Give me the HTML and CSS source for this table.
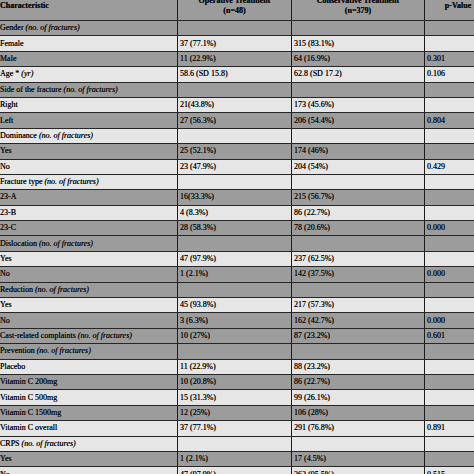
FILE: index.html
```html
<!DOCTYPE html>
<html>
<head>
<meta charset="utf-8">
<link rel="stylesheet" href="styles.css">
</head>
<body>
<div class="tbl">
  <div class="row head dark">
    <div class="c c1">Characteristic</div>
    <div class="c">Operative Treatment<br>(n=48)</div>
    <div class="c">Conservative Treatment<br>(n=379)</div>
    <div class="c">p-Value</div>
  </div>
  <div class="row dark"><div class="c c1">Gender&nbsp;<i>(no. of fractures)</i></div><div class="c"></div><div class="c"></div><div class="c"></div></div>
  <div class="row light"><div class="c c1">Female</div><div class="c">37 (77.1%)</div><div class="c">315 (83.1%)</div><div class="c"></div></div>
  <div class="row dark"><div class="c c1">Male</div><div class="c">11 (22.9%)</div><div class="c">64 (16.9%)</div><div class="c">0.301</div></div>
  <div class="row light"><div class="c c1">Age *&nbsp;<i>(yr)</i></div><div class="c">58.6 (SD 15.8)</div><div class="c">62.8 (SD 17.2)</div><div class="c">0.106</div></div>
  <div class="row dark"><div class="c c1">Side of the fracture&nbsp;<i>(no. of fractures)</i></div><div class="c"></div><div class="c"></div><div class="c"></div></div>
  <div class="row light"><div class="c c1">Right</div><div class="c">21(43.8%)</div><div class="c">173 (45.6%)</div><div class="c"></div></div>
  <div class="row dark"><div class="c c1">Left</div><div class="c">27 (56.3%)</div><div class="c">206 (54.4%)</div><div class="c">0.804</div></div>
  <div class="row light"><div class="c c1">Dominance&nbsp;<i>(no. of fractures)</i></div><div class="c"></div><div class="c"></div><div class="c"></div></div>
  <div class="row dark"><div class="c c1">Yes</div><div class="c">25 (52.1%)</div><div class="c">174 (46%)</div><div class="c"></div></div>
  <div class="row light"><div class="c c1">No</div><div class="c">23 (47.9%)</div><div class="c">204 (54%)</div><div class="c">0.429</div></div>
  <div class="row light"><div class="c c1">Fracture type&nbsp;<i>(no. of fractures)</i></div><div class="c"></div><div class="c"></div><div class="c"></div></div>
  <div class="row dark"><div class="c c1">23-A</div><div class="c">16(33.3%)</div><div class="c">215 (56.7%)</div><div class="c"></div></div>
  <div class="row light"><div class="c c1">23-B</div><div class="c">4 (8.3%)</div><div class="c">86 (22.7%)</div><div class="c"></div></div>
  <div class="row dark"><div class="c c1">23-C</div><div class="c">28 (58.3%)</div><div class="c">78 (20.6%)</div><div class="c">0.000</div></div>
  <div class="row dark"><div class="c c1">Dislocation&nbsp;<i>(no. of fractures)</i></div><div class="c"></div><div class="c"></div><div class="c"></div></div>
  <div class="row light"><div class="c c1">Yes</div><div class="c">47 (97.9%)</div><div class="c">237 (62.5%)</div><div class="c"></div></div>
  <div class="row dark"><div class="c c1">No</div><div class="c">1 (2.1%)</div><div class="c">142 (37.5%)</div><div class="c">0.000</div></div>
  <div class="row dark"><div class="c c1">Reduction&nbsp;<i>(no. of fractures)</i></div><div class="c"></div><div class="c"></div><div class="c"></div></div>
  <div class="row light"><div class="c c1">Yes</div><div class="c">45 (93.8%)</div><div class="c">217 (57.3%)</div><div class="c"></div></div>
  <div class="row dark"><div class="c c1">No</div><div class="c">3 (6.3%)</div><div class="c">162 (42.7%)</div><div class="c">0.000</div></div>
  <div class="row dark"><div class="c c1">Cast-related complaints&nbsp;<i>(no. of fractures)</i></div><div class="c">10 (27%)</div><div class="c">87 (23.2%)</div><div class="c">0.601</div></div>
  <div class="row dark"><div class="c c1">Prevention&nbsp;<i>(no. of fractures)</i></div><div class="c"></div><div class="c"></div><div class="c"></div></div>
  <div class="row light"><div class="c c1">Placebo</div><div class="c">11 (22.9%)</div><div class="c">88 (23.2%)</div><div class="c"></div></div>
  <div class="row dark"><div class="c c1">Vitamin C 200mg</div><div class="c">10 (20.8%)</div><div class="c">86 (22.7%)</div><div class="c"></div></div>
  <div class="row light"><div class="c c1">Vitamin C 500mg</div><div class="c">15 (31.3%)</div><div class="c">99 (26.1%)</div><div class="c"></div></div>
  <div class="row dark"><div class="c c1">Vitamin C 1500mg</div><div class="c">12 (25%)</div><div class="c">106 (28%)</div><div class="c"></div></div>
  <div class="row light"><div class="c c1">Vitamin C overall</div><div class="c">37 (77.1%)</div><div class="c">291 (76.8%)</div><div class="c">0.891</div></div>
  <div class="row light"><div class="c c1">CRPS&nbsp;<i>(no. of fractures)</i></div><div class="c"></div><div class="c"></div><div class="c"></div></div>
  <div class="row dark"><div class="c c1">Yes</div><div class="c">1 (2.1%)</div><div class="c">17 (4.5%)</div><div class="c"></div></div>
  <div class="row light"><div class="c c1">No</div><div class="c">47 (97.9%)</div><div class="c">362 (95.5%)</div><div class="c">0.515</div></div>
  <div class="row dark"><div class="c c1"></div><div class="c"></div><div class="c"></div><div class="c"></div></div>
</div>
</body>
</html>
```

FILE: styles.css
```css
html, body {
  margin: 0;
  padding: 0;
  width: 474px;
  height: 474px;
  overflow: hidden;
  background: #9c9c9c;
}
body {
  font-family: "Liberation Serif", "Times New Roman", serif;
  font-size: 8px;
  color: #111;
}
.tbl {
  margin-top: -9px;
  width: 492px;
}
.row {
  display: grid;
  grid-template-columns: 178px 114px 133px 67px;
  height: 15.4px;
  box-sizing: border-box;
  border-bottom: 1px solid #262626;
}
.row.dark { background: #9c9c9c; }
.row.light { background: #e6e6e6; }
.c {
  box-sizing: border-box;
  border-right: 1px solid #1c1c1c;
  padding: 0 2px;
  display: flex;
  align-items: center;
  white-space: nowrap;
  line-height: 10px;
  overflow: hidden;
  text-shadow: 0 0 0.3px #111;
}
.c1 { padding-left: 0; }
.c i { font-style: italic; }
.row.head {
  height: 30px;
  font-weight: bold;
}
.row.head .c {
  justify-content: center;
  text-align: center;
}
.row.head .c1 {
  justify-content: flex-start;
  text-align: left;
}
```
